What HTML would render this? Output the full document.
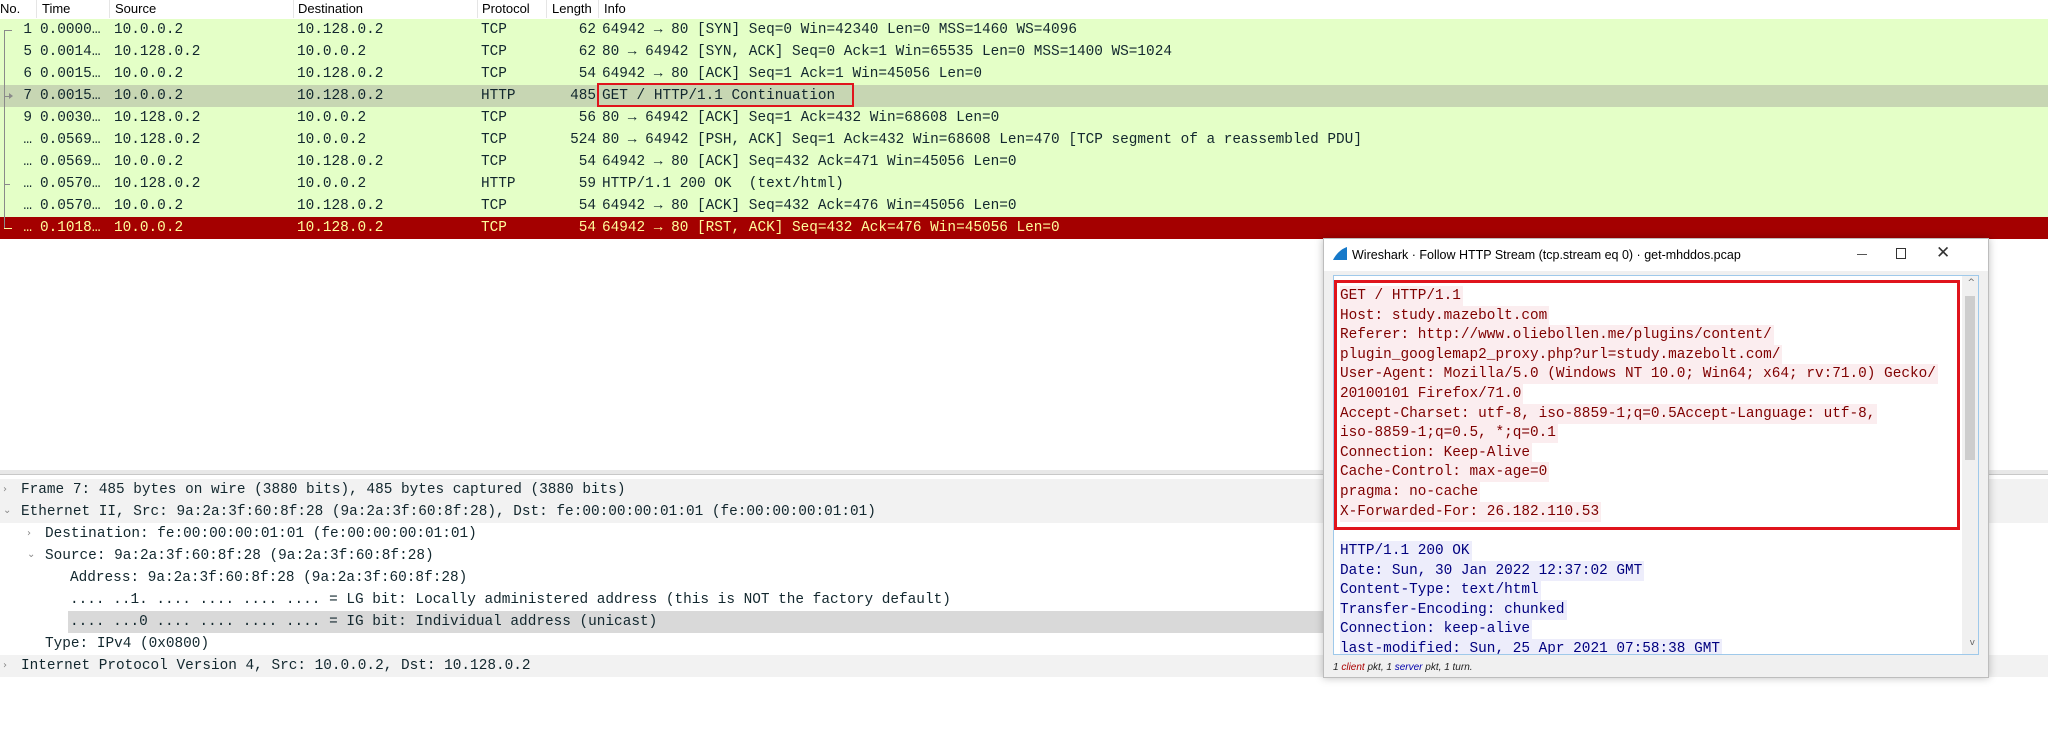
<!DOCTYPE html>
<html><head><meta charset="utf-8"><style>
*{margin:0;padding:0;box-sizing:border-box}
body{width:2048px;height:730px;background:#fff;position:relative;overflow:hidden;font-family:"Liberation Mono","DejaVu Sans Mono",monospace;font-size:14.4px;color:#12272e}
.hdr{position:absolute;top:0;left:0;width:2048px;height:18px;background:#fff;font-family:"Liberation Sans",sans-serif;font-size:13px;color:#000}
.hdr span{position:absolute;top:1px}
.hdr i{position:absolute;top:0;width:1px;height:18px;background:#e5e5e5}
.row{position:absolute;left:0;width:2048px;height:22px;line-height:22px;background:#e4ffc7;white-space:pre}
.row span{position:absolute;top:0}
.sel{background:#c7d6b3}
.red{background:#a40000;color:#fffc9c}
.c1{left:40px}.c2{left:114px}.c3{left:297px}.c4{left:481px}.c6{left:602px}
.c0{right:2016px;text-align:right}.c5{right:1452px;text-align:right}
.det{position:absolute;left:0;height:22px;line-height:22px;white-space:pre;width:2048px}
.det.g{background:#f2f2f2}
.det.s{background:#d9d9d9;left:68px;width:1260px}
.arr{position:absolute;font-family:"DejaVu Sans",sans-serif;font-size:10px;color:#888}
.dlg{position:absolute;left:1323px;top:238px;width:666px;height:440px;background:#f0f0f0;border:1px solid #bdbdbd;box-shadow:0 0 8px rgba(0,0,0,.25)}
.ttl{position:absolute;left:0;top:0;width:664px;height:32px;background:#fff;font-family:"Liberation Sans",sans-serif;font-size:12.5px;color:#000}
.txt{position:absolute;left:9px;top:36px;width:646px;height:380px;background:#fff;border:1px solid #9fc9ea;overflow:hidden}
.ln{position:absolute;left:6px;height:20px;line-height:20px;white-space:pre;padding-right:2px}
.cl{background:#fbedef;color:#7f0000;margin-top:4px}
.sv{background:#ededfb;color:#00007f}
</style></head><body>
<div class="hdr">
<span style="left:0">No.</span><i style="left:36px"></i>
<span style="left:42px">Time</span><i style="left:109px"></i>
<span style="left:115px">Source</span><i style="left:293px"></i>
<span style="left:298px">Destination</span><i style="left:477px"></i>
<span style="left:482px">Protocol</span><i style="left:546px"></i>
<span style="left:552px">Length</span><i style="left:598px"></i>
<span style="left:604px">Info</span>
</div>

<div class="row" style="top:19px"><span class="c0">1</span><span class="c1">0.0000…</span><span class="c2">10.0.0.2</span><span class="c3">10.128.0.2</span><span class="c4">TCP</span><span class="c5">62</span><span class="c6">64942 → 80 [SYN] Seq=0 Win=42340 Len=0 MSS=1460 WS=4096</span></div>
<div class="row" style="top:41px"><span class="c0">5</span><span class="c1">0.0014…</span><span class="c2">10.128.0.2</span><span class="c3">10.0.0.2</span><span class="c4">TCP</span><span class="c5">62</span><span class="c6">80 → 64942 [SYN, ACK] Seq=0 Ack=1 Win=65535 Len=0 MSS=1400 WS=1024</span></div>
<div class="row" style="top:63px"><span class="c0">6</span><span class="c1">0.0015…</span><span class="c2">10.0.0.2</span><span class="c3">10.128.0.2</span><span class="c4">TCP</span><span class="c5">54</span><span class="c6">64942 → 80 [ACK] Seq=1 Ack=1 Win=45056 Len=0</span></div>
<div class="row sel" style="top:85px"><span class="c0">7</span><span class="c1">0.0015…</span><span class="c2">10.0.0.2</span><span class="c3">10.128.0.2</span><span class="c4">HTTP</span><span class="c5">485</span><span class="c6">GET / HTTP/1.1 Continuation</span></div>
<div class="row" style="top:107px"><span class="c0">9</span><span class="c1">0.0030…</span><span class="c2">10.128.0.2</span><span class="c3">10.0.0.2</span><span class="c4">TCP</span><span class="c5">56</span><span class="c6">80 → 64942 [ACK] Seq=1 Ack=432 Win=68608 Len=0</span></div>
<div class="row" style="top:129px"><span class="c0">…</span><span class="c1">0.0569…</span><span class="c2">10.128.0.2</span><span class="c3">10.0.0.2</span><span class="c4">TCP</span><span class="c5">524</span><span class="c6">80 → 64942 [PSH, ACK] Seq=1 Ack=432 Win=68608 Len=470 [TCP segment of a reassembled PDU]</span></div>
<div class="row" style="top:151px"><span class="c0">…</span><span class="c1">0.0569…</span><span class="c2">10.0.0.2</span><span class="c3">10.128.0.2</span><span class="c4">TCP</span><span class="c5">54</span><span class="c6">64942 → 80 [ACK] Seq=432 Ack=471 Win=45056 Len=0</span></div>
<div class="row" style="top:173px"><span class="c0">…</span><span class="c1">0.0570…</span><span class="c2">10.128.0.2</span><span class="c3">10.0.0.2</span><span class="c4">HTTP</span><span class="c5">59</span><span class="c6">HTTP/1.1 200 OK  (text/html)</span></div>
<div class="row" style="top:195px"><span class="c0">…</span><span class="c1">0.0570…</span><span class="c2">10.0.0.2</span><span class="c3">10.128.0.2</span><span class="c4">TCP</span><span class="c5">54</span><span class="c6">64942 → 80 [ACK] Seq=432 Ack=476 Win=45056 Len=0</span></div>
<div class="row red" style="top:217px"><span class="c0">…</span><span class="c1">0.1018…</span><span class="c2">10.0.0.2</span><span class="c3">10.128.0.2</span><span class="c4">TCP</span><span class="c5">54</span><span class="c6">64942 → 80 [RST, ACK] Seq=432 Ack=476 Win=45056 Len=0</span></div>
<div style="position:absolute;left:4px;top:30px;width:1px;height:198px;background:#8a8a8a"></div>
<div style="position:absolute;left:4px;top:30px;width:8px;height:1px;background:#8a8a8a"></div>
<div style="position:absolute;left:4px;top:228px;width:8px;height:1px;background:#fffc9c"></div>
<div style="position:absolute;left:4px;top:96px;width:6px;height:1px;background:#8a8a8a"></div>
<div style="position:absolute;left:9px;top:93px;border-left:4px solid #8a8a8a;border-top:3px solid transparent;border-bottom:3px solid transparent"></div>
<div style="position:absolute;left:4px;top:184px;width:6px;height:1px;background:#8a8a8a"></div>
<div style="position:absolute;left:597px;top:83px;width:257px;height:24px;border:2px solid #e0141c"></div>

<div style="position:absolute;left:0;top:470px;width:2048px;height:5px;background:#e8e8e8;border-bottom:1px solid #c8c8c8"></div>

<div class="det g" style="top:479px"><span style="position:absolute;left:21px">Frame 7: 485 bytes on wire (3880 bits), 485 bytes captured (3880 bits)</span></div>
<div class="det g" style="top:501px"><span style="position:absolute;left:21px">Ethernet II, Src: 9a:2a:3f:60:8f:28 (9a:2a:3f:60:8f:28), Dst: fe:00:00:00:01:01 (fe:00:00:00:01:01)</span></div>
<div class="det" style="top:523px"><span style="position:absolute;left:45px">Destination: fe:00:00:00:01:01 (fe:00:00:00:01:01)</span></div>
<div class="det" style="top:545px"><span style="position:absolute;left:45px">Source: 9a:2a:3f:60:8f:28 (9a:2a:3f:60:8f:28)</span></div>
<div class="det" style="top:567px"><span style="position:absolute;left:70px">Address: 9a:2a:3f:60:8f:28 (9a:2a:3f:60:8f:28)</span></div>
<div class="det" style="top:589px"><span style="position:absolute;left:70px">.... ..1. .... .... .... .... = LG bit: Locally administered address (this is NOT the factory default)</span></div>
<div class="det s" style="top:611px"><span style="position:absolute;left:2px">.... ...0 .... .... .... .... = IG bit: Individual address (unicast)</span></div>
<div class="det" style="top:633px"><span style="position:absolute;left:45px">Type: IPv4 (0x0800)</span></div>
<div class="det g" style="top:655px"><span style="position:absolute;left:21px">Internet Protocol Version 4, Src: 10.0.0.2, Dst: 10.128.0.2</span></div>
<span class="arr" style="left:3px;top:484px">›</span>
<span class="arr" style="left:3px;top:505px">⌄</span>
<span class="arr" style="left:27px;top:528px">›</span>
<span class="arr" style="left:27px;top:549px">⌄</span>
<span class="arr" style="left:3px;top:660px">›</span>

<div class="dlg">
<div class="ttl">
<svg style="position:absolute;left:8px;top:8px" width="16" height="14" viewBox="0 0 16 14"><path d="M1 13 L15 13 L15 0 C9 2 4 7 1 13Z" fill="#1679c9"/></svg>
<span style="position:absolute;left:28px;top:9px">Wireshark · Follow HTTP Stream (tcp.stream eq 0) · get-mhddos.pcap</span>
<span style="position:absolute;left:533px;top:15px;width:10px;height:1px;background:#555"></span>
<span style="position:absolute;left:572px;top:9px;width:10px;height:11px;border:1px solid #333"></span>
<span style="position:absolute;left:612px;top:4px;font-size:17px;color:#333">✕</span>
</div>
<div class="txt">
<div class="ln cl" style="top:6px">GET / HTTP/1.1</div>
<div class="ln cl" style="top:25.6px">Host: study.mazebolt.com</div>
<div class="ln cl" style="top:45.2px">Referer: http://www.oliebollen.me/plugins/content/</div>
<div class="ln cl" style="top:64.8px">plugin_googlemap2_proxy.php?url=study.mazebolt.com/</div>
<div class="ln cl" style="top:84.4px">User-Agent: Mozilla/5.0 (Windows NT 10.0; Win64; x64; rv:71.0) Gecko/</div>
<div class="ln cl" style="top:104px">20100101 Firefox/71.0</div>
<div class="ln cl" style="top:123.6px">Accept-Charset: utf-8, iso-8859-1;q=0.5Accept-Language: utf-8,</div>
<div class="ln cl" style="top:143.2px">iso-8859-1;q=0.5, *;q=0.1</div>
<div class="ln cl" style="top:162.8px">Connection: Keep-Alive</div>
<div class="ln cl" style="top:182.4px">Cache-Control: max-age=0</div>
<div class="ln cl" style="top:202px">pragma: no-cache</div>
<div class="ln cl" style="top:221.6px">X-Forwarded-For: 26.182.110.53</div>
<div class="ln sv" style="top:265px">HTTP/1.1 200 OK</div>
<div class="ln sv" style="top:284.6px">Date: Sun, 30 Jan 2022 12:37:02 GMT</div>
<div class="ln sv" style="top:304.2px">Content-Type: text/html</div>
<div class="ln sv" style="top:323.8px">Transfer-Encoding: chunked</div>
<div class="ln sv" style="top:343.4px">Connection: keep-alive</div>
<div class="ln sv" style="top:363px">last-modified: Sun, 25 Apr 2021 07:58:38 GMT</div>
<div style="position:absolute;left:0;top:4px;width:626px;height:250px;border:3px solid #e0141c"></div>
<div style="position:absolute;right:0;top:0;width:16px;height:378px;background:#f0f0f0"></div>
<div style="position:absolute;right:3px;top:20px;width:10px;height:164px;background:#cdcdcd"></div>
<span style="position:absolute;right:3px;top:2px;font-family:'DejaVu Sans',sans-serif;font-size:9px;color:#666">^</span>
<span style="position:absolute;right:3px;top:362px;font-family:'DejaVu Sans',sans-serif;font-size:9px;color:#666">v</span>
</div>
<div style="position:absolute;left:9px;top:423px;font-family:'Liberation Sans',sans-serif;font-size:10px;font-style:italic;color:#222">1 <span style="color:#a00">client</span> pkt, 1 <span style="color:#00a">server</span> pkt, 1 turn.</div>
</div>
</body></html>
